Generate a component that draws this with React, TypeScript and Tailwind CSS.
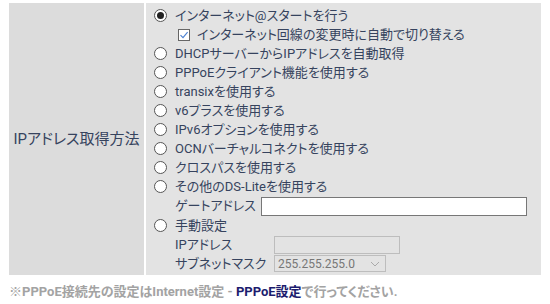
import React from "react";

const font = "[font-family:Roboto,'Noto_Sans_CJK_JP',sans-serif] [font-feature-settings:'palt']";

function Radio({ checked = false }: { checked?: boolean }) {
  return (
    <span className="w-[13px] h-[13px] rounded-full border border-[#555] bg-white flex items-center justify-center shrink-0">
      {checked && <span className="w-[7px] h-[7px] rounded-full bg-[#222]" />}
    </span>
  );
}

function Check() {
  return (
    <span className="w-[12px] h-[12px] border border-[#666] bg-white flex items-center justify-center shrink-0">
      <svg width="10" height="10" viewBox="0 0 10 10" fill="none">
        <path d="M1.5 5.2 L4 7.6 L8.6 2.2" stroke="#4a7fd0" strokeWidth="1.1" />
      </svg>
    </span>
  );
}

const options = [
  "DHCPサーバーからIPアドレスを自動取得",
  "PPPoEクライアント機能を使用する",
  "transixを使用する",
  "v6プラスを使用する",
  "IPv6オプションを使用する",
  "OCNバーチャルコネクトを使用する",
  "クロスパスを使用する",
  "その他のDS-Liteを使用する",
];

export default function App() {
  return (
    <div className={`w-[550px] h-[304px] bg-white text-[#36435e] ${font}`}>
      <div className="pt-[3px] pl-[9px] flex gap-[2px]">
        <div className="w-[135px] bg-[#dcdcdc] flex items-center justify-center text-[15px]">
          IPアドレス取得方法
        </div>
        <div className="w-[395px] bg-[#e3e3e3] pt-[3px] pb-[2px] pl-[8px] text-[13px]">
          <div className="h-[19px] flex items-center gap-[8px]">
            <Radio checked />
            <span>インターネット@スタートを行う</span>
          </div>
          <div className="h-[19px] flex items-center gap-[7px] pl-[24px]">
            <Check />
            <span>インターネット回線の変更時に自動で切り替える</span>
          </div>
          {options.map((o) => (
            <div key={o} className="h-[19px] flex items-center gap-[8px]">
              <Radio />
              <span>{o}</span>
            </div>
          ))}
          <div className="h-[20px] flex items-center gap-[5px] pl-[21px]">
            <span>ゲートアドレス</span>
            <input className="w-[266px] h-[19px] bg-white border border-[#777] outline-none" />
          </div>
          <div className="h-[19px] flex items-center gap-[8px]">
            <Radio />
            <span>手動設定</span>
          </div>
          <div className="h-[19px] flex items-center pl-[21px]">
            <span className="w-[99px]">IPアドレス</span>
            <input
              disabled
              className="w-[126px] h-[18px] bg-[#e3e3e3] border border-[#bdbdbd]"
            />
          </div>
          <div className="h-[19px] flex items-center pl-[21px]">
            <span className="w-[99px]">サブネットマスク</span>
            <div className="w-[112px] h-[17px] border border-[#bdbdbd] flex items-center justify-between pl-[3px] pr-[5px] text-[12px] text-[#777]">
              <span>255.255.255.0</span>
              <svg width="10" height="6" viewBox="0 0 10 6" fill="none">
                <path d="M1 1 L5 5 L9 1" stroke="#aaa" strokeWidth="1" />
              </svg>
            </div>
          </div>
        </div>
      </div>
      <div className="pl-[9px] pt-[7px] text-[13px] font-bold text-[#a3a3a3]">
        ※PPPoE接続先の設定はInternet設定 - <span className="text-[#1c1c6e]">PPPoE設定</span>で行ってください.
      </div>
    </div>
  );
}
